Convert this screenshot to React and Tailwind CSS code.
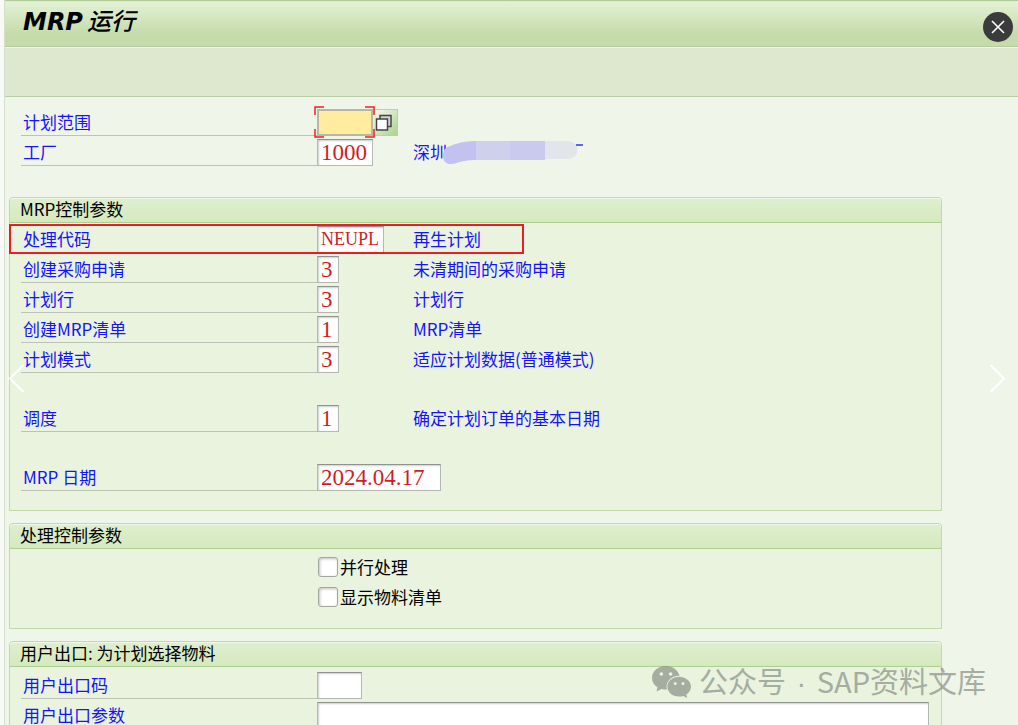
import React, { useState } from 'react';

const inputBase =
  "block h-[27px] border border-[#b4b8b0] border-t-[#8f928d] bg-white pl-[3px] font-['Liberation_Serif','Noto_Sans_CJK_SC',serif] text-[#cc1f1f] shadow-[inset_1px_1px_2px_rgba(0,0,0,0.2)] outline-none";

const labelBase =
  'flex h-[27px] w-[296px] shrink-0 items-center border-b border-[#bcc2b6] pb-px pl-[2px] text-[#1414ff]';

// One line of the selection screen: underlined label, input, description
function Field({ id, label, value = '', width = 'w-[22px]', size = 'text-[23px]', text, marked }) {
  const [current, setCurrent] = useState(value);

  return (
    <div className="relative flex h-[30px] items-end">
      <label htmlFor={id} className={labelBase}>
        {label}
      </label>
      <div className="w-24 shrink-0">
        <input
          id={id}
          type="text"
          value={current}
          onChange={(e) => setCurrent(e.target.value)}
          className={`${inputBase} ${width} ${size}`}
        />
      </div>
      <span className="flex h-[27px] items-center pb-[2px] whitespace-nowrap text-[#1414ff]">{text}</span>
      {marked && (
        <div className="pointer-events-none absolute top-px -left-3 h-[30px] w-[515px] border-2 border-[#ed1c24]" />
      )}
    </div>
  );
}

function Group({ title, children }) {
  return (
    <section className="rounded-t border border-[#bfdaa4] bg-[#eaf3de]">
      <h2 className="flex h-[25px] items-center rounded-t border-b border-[#afcf92] bg-linear-to-b from-[#dfefcf] to-[#d5e9bd] pb-[3px] pl-[10px] text-black shadow-[inset_0_1px_0_#f0f8e8]">
        {title}
      </h2>
      <div className="pr-3 pl-[10px]">{children}</div>
    </section>
  );
}

function Check({ label }) {
  return (
    <label className="flex h-[30px] items-center gap-[2px] pl-[297px] text-black">
      <input
        type="checkbox"
        className="h-5 w-5 appearance-none rounded-[3px] border border-[#a3a69f] bg-white shadow-[inset_1px_1px_3px_rgba(0,0,0,0.25)] checked:bg-[#8ab468]"
      />
      {label}
    </label>
  );
}

export default function App() {
  const [scope, setScope] = useState('');

  return (
    <div className="relative h-screen overflow-hidden bg-[#f8faf5] pl-1 font-['Noto_Sans_CJK_SC',sans-serif] text-[17px] leading-6">
      <div className="min-h-full border-l border-[#d6dfcd] bg-[#f0f5ea]">
        {/* Title bar */}
        <header className="flex h-[47px] items-start border-t border-b border-t-[#b1cb99] border-b-[#b7cba2] bg-linear-to-b from-[#e4f2d6] to-[#c5dba9] to-75% pl-[18px] shadow-[inset_0_1px_0_#dcebcb]">
          <h1 className="flex gap-1 pt-[5px] font-['DejaVu_Sans','Noto_Sans_CJK_SC',sans-serif] text-2xl leading-8 font-bold text-black italic">
            MRP <span className="font-medium">运行</span>
          </h1>
        </header>
        <div className="h-[50px] border-t border-b border-t-[#f0f5e8] border-b-[#b8cda5] bg-[#dee8cf]" />

        <main className="mr-[76px] pl-1">
          <div className="pt-[9px] pb-[31px] pl-3">
            <div className="flex h-[30px] items-end">
              <label htmlFor="scope" className={labelBase}>
                计划范围
              </label>
              <div className="relative">
                <input
                  id="scope"
                  type="text"
                  value={scope}
                  onChange={(e) => setScope(e.target.value)}
                  className="block h-[27px] w-[56px] border-2 border-[#b9b7a4] bg-[#ffec9e] pl-[3px] font-['Liberation_Serif',serif] text-[23px] text-[#cc1f1f] outline-none"
                />
                <svg className="pointer-events-none absolute -top-[3px] -left-[3px]" width="62" height="33" fill="none" stroke="#ee2222" strokeWidth="1.5">
                  <path d="M1 9V1h9M51 1h9v8M60 23v8h-9M10 31H1v-8" />
                </svg>
              </div>
              <button
                type="button"
                aria-label="搜索帮助"
                className="flex h-[27px] w-[25px] items-center border border-l-0 border-[#c3c9bb] bg-linear-to-br from-[#f6faf1] to-[#afd18f] pl-[2px]"
              >
                <svg width="18" height="18" viewBox="0 0 18 18" stroke="#444" strokeWidth="1.5">
                  <path d="M5 1.5h11v11H5z" fill="#d5d8c8" />
                  <path d="M1.5 5h11v11h-11z" fill="#fff" />
                </svg>
              </button>
            </div>
            <Field
              id="plant"
              label="工厂"
              value="1000"
              width="w-[56px]"
              text={
                <span className="relative">
                  深圳
                  <svg className="absolute top-0 left-[27px]" width="146" height="26">
                    <path d="M36 1C20 1 12 5 6 8c-5 4-4 16 4 16 8 0 10-4 26-4z" fill="#c2c2f0" />
                    <path d="M36 1h34v19H36z" fill="#cfd1ec" />
                    <path d="M70 1h35v19H70z" fill="#c9caee" />
                    <path d="M105 1h22c14 0 14 18 0 18h-22z" fill="#e2e6ea" />
                    <path d="M136 5h7" stroke="#1414ff" strokeWidth="1.3" />
                  </svg>
                </span>
              }
            />
          </div>

          <div className="space-y-3">
            <Group title="MRP控制参数">
              <div className="pb-[19px] pl-px">
                <Field id="key" label="处理代码" value="NEUPL" width="w-[67px]" size="text-[18px]" text="再生计划" marked />
                <Field id="preq" label="创建采购申请" value="3" text="未清期间的采购申请" />
                <Field id="lines" label="计划行" value="3" text="计划行" />
                <Field id="list" label="创建MRP清单" value="1" text="MRP清单" />
                <Field id="mode" label="计划模式" value="3" text="适应计划数据(普通模式)" />
                <div className="pt-[29px]">
                  <Field id="sched" label="调度" value="1" text="确定计划订单的基本日期" />
                </div>
                <div className="pt-[29px]">
                  <Field id="date" label="MRP 日期" value="2024.04.17" width="w-[124px]" />
                </div>
              </div>
            </Group>

            <Group title="处理控制参数">
              <div className="pt-[3px] pb-4 pl-px">
                <Check label="并行处理" />
                <Check label="显示物料清单" />
              </div>
            </Group>

            <Group title="用户出口: 为计划选择物料">
              <div className="pt-[2px] pb-5 pl-px">
                <Field id="exit" label="用户出口码" width="w-[45px]" />
                <div className="flex h-[30px] items-end">
                  <label htmlFor="param" className={labelBase}>
                    用户出口参数
                  </label>
                  <input id="param" type="text" className={`${inputBase} min-w-0 flex-1 text-[23px]`} />
                </div>
              </div>
            </Group>
          </div>
        </main>
      </div>

      {/* Viewer controls over the screen */}
      <button
        type="button"
        aria-label="关闭"
        className="absolute top-3 right-[5px] flex h-[30px] w-[30px] items-center justify-center rounded-full bg-[#3b3b3b]"
      >
        <svg width="14" height="14" viewBox="0 0 14 14" stroke="#fff" strokeWidth="1.6">
          <path d="M1 1l12 12M13 1L1 13" />
        </svg>
      </button>
      <button type="button" aria-label="上一张" className="absolute top-[364px] left-2">
        <svg width="17" height="29" fill="none" stroke="#fff" strokeWidth="2">
          <path d="M15.5 1L2 14.5L15.5 28" />
        </svg>
      </button>
      <button type="button" aria-label="下一张" className="absolute top-[364px] right-3">
        <svg width="17" height="29" fill="none" stroke="#fff" strokeWidth="2">
          <path d="M1.5 1L15 14.5L1.5 28" />
        </svg>
      </button>

      <div className="pointer-events-none absolute right-8 bottom-5 flex items-center gap-2 text-[29px] leading-[44px] whitespace-nowrap text-[#808880] opacity-65">
        <svg width="39" height="32" viewBox="0 0 39 32" fill="currentColor">
          <path
            fillRule="evenodd"
            d="M14 0C6 0 0 5.4 0 12c0 4 2 7 5.5 9.3L4.5 25.5l5-2.6c1.7.5 3.500.7 5.500.7C13 16 19 9.5 27.5 9.7 26 4 20.5 0 14 0zM9.3 6.2a1.8 1.8 0 110 3.6 1.8 1.8 0 010-3.6zM18.6 6.2a1.8 1.8 0 110 3.6 1.8 1.8 0 010-3.6z"
          />
          <path
            fillRule="evenodd"
            d="M27 10.8c-6.5 0-11.6 4.4-11.6 9.9S20.5 30.5 27 30.5c1.5 0 3-.2 4.2-.6l4.1 2.1-1-3.6c2.9-1.900 4.700-4.500 4.700-7.700 0-5.500-5.500-9.900-12-9.900zM23.200 15.900a1.500 1.500 0 110 3 1.500 1.500 0 010-3zM31 15.900a1.500 1.500 0 110 3 1.500 1.500 0 010-3z"
          />
        </svg>
        <span>
          公众号 <span className="mx-1 font-['Liberation_Sans',sans-serif]">·</span> SAP资料文库
        </span>
      </div>
    </div>
  );
}
